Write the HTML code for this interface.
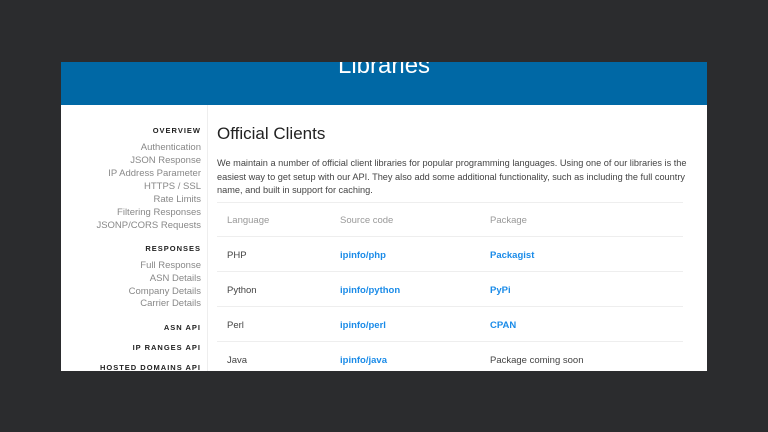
<!DOCTYPE html>
<html><head><style>
*{margin:0;padding:0;box-sizing:border-box}
body{width:768px;height:432px;background:#2b2c2e;position:relative;overflow:hidden;font-family:"Liberation Sans",sans-serif}
#panel{position:absolute;left:61px;top:62px;width:646px;height:309px;background:#fff;overflow:hidden}
#hdr{position:absolute;left:0;top:0;width:646px;height:43px;background:#0068a5}
#hdr span{position:absolute;left:277px;top:-10px;color:#fff;font-size:24px}
#div{position:absolute;left:146px;top:43px;width:1px;height:266px;background:#eee}
.s{position:absolute;right:506px;font-size:9.5px;color:#888;white-space:nowrap;text-align:right}
.h{font-weight:bold;color:#222;font-size:7.5px;letter-spacing:1px}
.t{position:absolute;white-space:nowrap;font-size:9.5px;color:#444}
.a{color:#1a8be8;font-weight:bold}
.g{color:#999}
.ln{position:absolute;left:156px;width:466px;height:1px;background:#eee}
</style></head><body>
<div id="panel">
<div id="hdr"><span>Libraries</span></div>
<div id="div"></div>
<div class="s h" style="top:64px">OVERVIEW</div>
<div class="s" style="top:80px">Authentication</div>
<div class="s" style="top:93px">JSON Response</div>
<div class="s" style="top:106px">IP Address Parameter</div>
<div class="s" style="top:119px">HTTPS / SSL</div>
<div class="s" style="top:132px">Rate Limits</div>
<div class="s" style="top:145px">Filtering Responses</div>
<div class="s" style="top:158px">JSONP/CORS Requests</div>
<div class="s h" style="top:182px">RESPONSES</div>
<div class="s" style="top:198px">Full Response</div>
<div class="s" style="top:211px">ASN Details</div>
<div class="s" style="top:224px">Company Details</div>
<div class="s" style="top:236px">Carrier Details</div>
<div class="s h" style="top:261px">ASN API</div>
<div class="s h" style="top:281px">IP RANGES API</div>
<div class="s h" style="top:301px">HOSTED DOMAINS API</div>
<div class="t" style="left:156px;top:62px;font-size:17px;color:#222">Official Clients</div>
<div class="t" style="left:156px;top:95px;line-height:13.5px;font-size:9.2px">We maintain a number of official client libraries for popular programming languages. Using one of our libraries is the<br>easiest way to get setup with our API. They also add some additional functionality, such as including the full country<br>name, and built in support for caching.</div>
<div class="ln" style="top:140px"></div>
<div class="t g" style="left:166px;top:153px">Language</div>
<div class="t g" style="left:279px;top:153px">Source code</div>
<div class="t g" style="left:429px;top:153px">Package</div>
<div class="ln" style="top:174px"></div>
<div class="t" style="left:166px;top:188px">PHP</div><div class="t a" style="left:279px;top:188px">ipinfo/php</div><div class="t a" style="left:429px;top:188px">Packagist</div>
<div class="ln" style="top:209px"></div>
<div class="t" style="left:166px;top:223px">Python</div><div class="t a" style="left:279px;top:223px">ipinfo/python</div><div class="t a" style="left:429px;top:223px">PyPi</div>
<div class="ln" style="top:244px"></div>
<div class="t" style="left:166px;top:258px">Perl</div><div class="t a" style="left:279px;top:258px">ipinfo/perl</div><div class="t a" style="left:429px;top:258px">CPAN</div>
<div class="ln" style="top:279px"></div>
<div class="t" style="left:166px;top:293px">Java</div><div class="t a" style="left:279px;top:293px">ipinfo/java</div><div class="t" style="left:429px;top:293px">Package coming soon</div>
</div>
</body></html>
